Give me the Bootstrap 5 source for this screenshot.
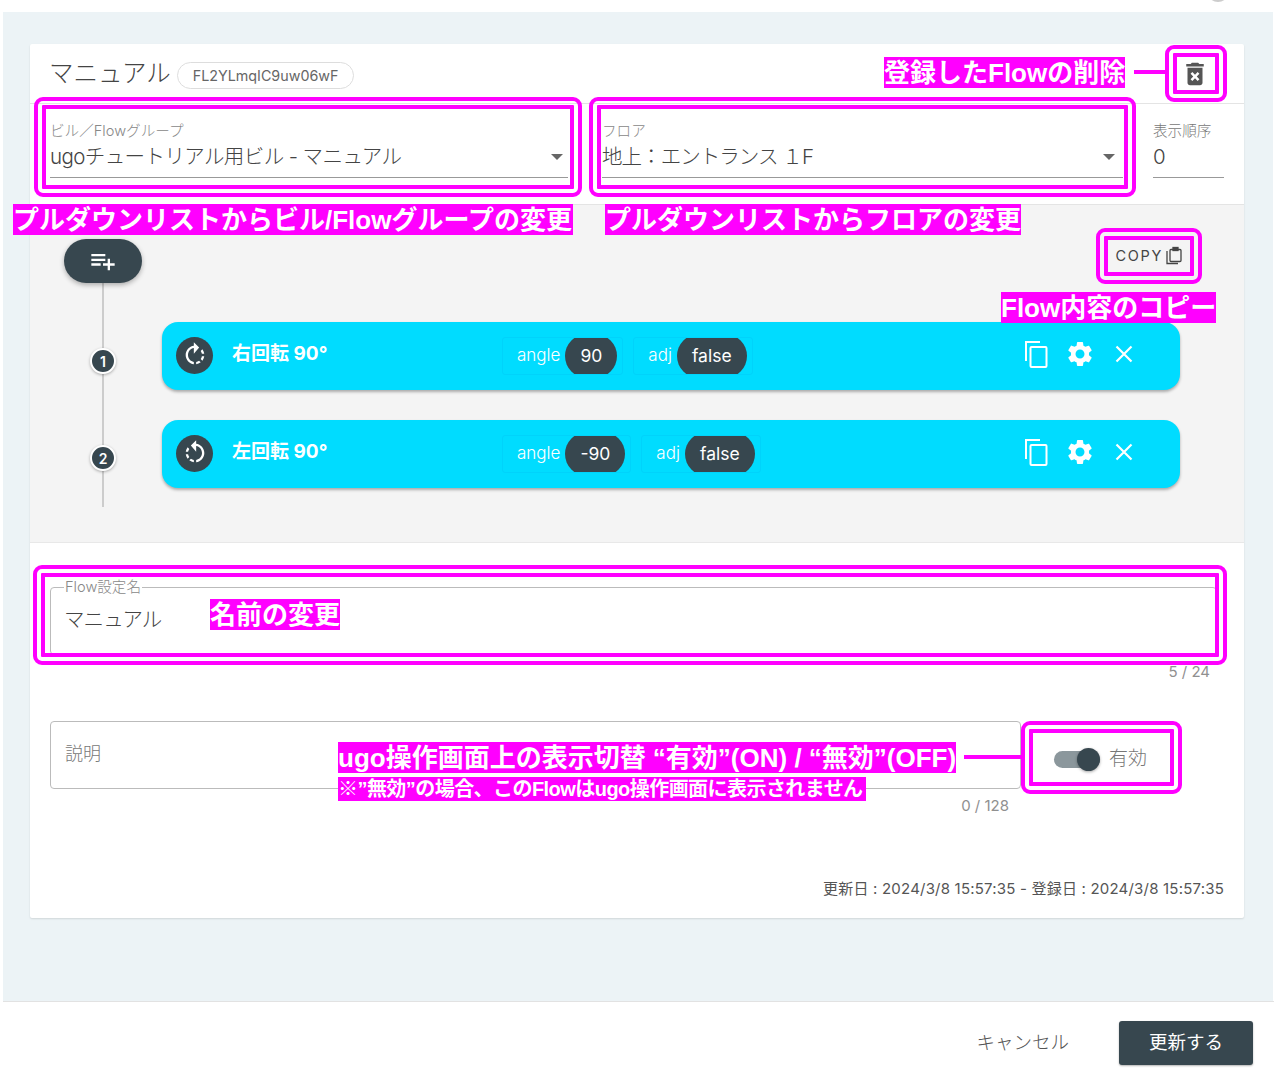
<!DOCTYPE html>
<html lang="ja">
<head>
<meta charset="utf-8">
<title>Flow</title>
<link href="https://cdn.jsdelivr.net/npm/bootstrap@5.3.0/dist/css/bootstrap.min.css" rel="stylesheet">
<style>
:root{--ink:#37474f;--cy:#00dcff;--hot:#ff00ff}
html,body{height:100%}
body{background:#fff;font-family:"Inter","Noto Sans CJK JP",sans-serif;color:#444;position:relative;height:1071px;overflow:hidden}
.shell{height:1071px;padding-top:12px}
.avatar-edge{position:absolute;left:1207px;top:-20px;width:22px;height:22px;border-radius:50%;background:#ccc}
.stage{height:989px;margin:0 1px 0 3px;background:#ecf3f6;padding:32px 0 0 27px}
.sheet{width:1214px;height:874px;border:0;border-radius:2px;box-shadow:0 1px 2px rgba(0,0,0,.12);overflow:hidden}
.head-row{height:60px;border-bottom:1px solid #e4e4e4;padding:0 34px 0 20px}
.title-txt{font-size:24.500px;font-weight:300;color:#444;margin:0 0 0 -1px;line-height:1}
.id-chip{margin:4px 0 0 6px;height:27px;padding:0 15px;border:1px solid #ddd;border-radius:14px;font-size:14.300px;color:#666;background:#fff;font-weight:400}
.pick-row{height:101px;padding:0 20px;border-bottom:1px solid #e4e4e4;gap:0}
.pick{padding-top:17px;position:relative}
.pick-a{width:518px;margin-right:34px}.pick-b{width:521px;margin-right:30px}.pick-c{width:71px}
.pick label{display:block;font-size:14.600px;line-height:20px;color:#888;font-weight:300}
.pick .form-select,.pick .form-control{height:37px;padding:0 0 5px;border:0;border-bottom:1px solid #999;border-radius:0;background:none;font-size:20.500px;color:#444;font-weight:300;line-height:32px;box-shadow:none}
.pick-a .form-select{letter-spacing:-.6px}
.pick-b .form-select{letter-spacing:-.95px}
.pick-c label{color:#777}
.caret-mark{position:absolute;right:5px;top:50px;width:0;height:0;border-left:6px solid transparent;border-right:6px solid transparent;border-top:6px solid #666}
.pick-b .caret-mark{right:8px}
.flow-zone{height:338px;background:#f4f4f4;border-bottom:1px solid #e8e8e8;padding-top:34px}
.tool-row{padding:0 50px 0 34px;height:44px}
.add-pill{width:78px;height:44px;border-radius:22px;background:var(--ink);border:0;padding:0;box-shadow:0 2px 5px rgba(0,0,0,.3)}
.copy-btn{background:none;border:0;padding:0 10px;height:28px;font-size:14.500px;letter-spacing:1.700px;color:#444;gap:1px;margin-top:3px}
.rail{margin-left:72px;border-left:2px solid #ccc;height:224px;padding-top:39px}
.step{height:68px;margin-bottom:30px}
.step-num{width:26px;height:26px;margin:26px 0 0 -14px;border-radius:50%;background:var(--ink);border:2px solid #fff;color:#fff;font-size:14px;font-weight:600;box-shadow:0 1px 3px rgba(0,0,0,.3);flex:none}
.step-two .step-num{margin-top:25px}
.cmd{margin-left:46px;width:1018px;height:68px;background:var(--cy);border-radius:16px;padding:0 46px 0 14px;color:#fff;box-shadow:0 2px 3px rgba(0,0,0,.3)}
.cmd-ic{width:37px;height:37px;border-radius:50%;background:var(--ink);flex:none;margin-top:-2px}
.cmd-name{width:270px;margin-left:19px;font-size:19px;font-weight:700;margin-top:-3px}
.param{height:38px;border:1px solid rgba(0,150,220,.12);border-radius:3px;padding:0 5px 0 14px;margin-right:10px;overflow:hidden;font-size:17px;font-weight:300}
.param-k{margin-right:5px}
.param-v{height:44px;border-radius:22px;background:var(--ink);padding:0 15px;font-weight:400;font-size:17.500px;flex:none}
.cmd-acts{margin-left:auto;gap:19px;margin-top:-4px}
.ic-copy{margin-right:-3px}
.form-wrap{padding:0 20px;position:relative}
.name-set{margin:34px 7px 0 0;border:1px solid #bbb;border-radius:4px;padding:0 13px;height:78px}
.name-set legend{float:none;width:auto;font-size:14.600px;line-height:20px;color:#888;margin:0;padding:0 1px;font-weight:300}
.name-set .form-control{border:0;padding:0;font-size:20.500px;height:36px;font-weight:300;color:#444;background:none;box-shadow:none;margin-top:3px;letter-spacing:-.9px}
.count-txt{font-size:15px;color:#909090;line-height:20px;font-weight:400}
.count-a{text-align:right;padding-right:14px;margin-top:7px}
.desc-row{margin-top:39px}
.desc-col{width:971px}
.desc-box{height:68px;border:1px solid #bbb;border-radius:4px;padding:18px 14px 18px 14px;font-size:18px;font-weight:300;resize:none;background:#fff;box-shadow:none}
.desc-box::placeholder{color:#777}
.count-b{text-align:right;padding-right:12px;margin-top:7px}
.sw-wrap{margin:21px 0 0 33px;min-height:0;padding:0;gap:9px;height:34px}
.track{width:46px;height:17px;border-radius:9px;background:#8b979c;position:relative;display:block}
.track::after{content:"";position:absolute;right:0;top:-3px;width:23px;height:23px;border-radius:50%;background:var(--ink);box-shadow:0 1px 3px rgba(0,0,0,.35)}
.sw-label{font-size:19px;color:#777;font-weight:300}
.stamp{text-align:right;font-size:15px;letter-spacing:.2px;color:#555;margin-top:63px;line-height:20px;font-weight:400}
.bottom-bar{position:absolute;left:3px;right:0;top:1001px;height:70px;background:#fff;border-top:1px solid #e2e2e2;padding:13px 21px 0 0}
.ghost-btn{background:none;border:0;font-size:18.500px;color:#555;padding:0;margin-right:50px;font-weight:300}
.main-btn{width:134px;height:44px;background:var(--ink);color:#fff;border:0;border-radius:3px;font-size:18.500px;font-weight:400;padding:0;box-shadow:0 1px 2px rgba(0,0,0,.3)}
.hl{position:absolute;border:4px solid var(--hot);outline:4px solid var(--hot);outline-offset:4px;border-radius:1px;pointer-events:none}
.tag{position:absolute;background:var(--hot);color:#fff;font-family:"Liberation Sans","Noto Sans CJK JP",sans-serif;font-weight:700;font-size:26px;line-height:32px;height:31px;white-space:nowrap}
.tag-sm{font-size:20px;line-height:25px;height:24px;letter-spacing:-.55px}
.dash{position:absolute;height:4px;background:var(--hot)}
</style>
</head>
<body>
<div class="avatar-edge"></div>
<div class="shell">
  <div class="stage">
    <div class="card sheet">
      <div class="head-row d-flex align-items-center">
        <h1 class="title-txt">マニュアル</h1>
        <span class="id-chip d-inline-flex align-items-center">FL2YLmqIC9uw06wF</span>
        <svg class="ms-auto" width="30" height="30" viewBox="0 0 24 24" fill="#555"><path d="M6 19c0 1.100.9 2 2 2h8c1.100 0 2-.9 2-2V7H6v12zm2.460-7.120l1.410-1.410L12 12.590l2.120-2.120 1.410 1.410L13.410 14l2.120 2.120-1.410 1.410L12 15.410l-2.120 2.120-1.410-1.410L10.590 14l-2.130-2.120zM15.500 4l-1-1h-5l-1 1H5v2h14V4z"/></svg>
      </div>
      <div class="pick-row d-flex">
        <div class="pick pick-a"><label>ビル／Flowグループ</label><select class="form-select"><option>ugoチュートリアル用ビル - マニュアル</option></select><span class="caret-mark"></span></div>
        <div class="pick pick-b"><label>フロア</label><select class="form-select"><option>地上：エントランス １F</option></select><span class="caret-mark"></span></div>
        <div class="pick pick-c"><label>表示順序</label><input class="form-control" value="0"></div>
      </div>
      <div class="flow-zone">
        <div class="tool-row d-flex justify-content-between align-items-start">
          <button class="add-pill d-flex align-items-center justify-content-center" type="button"><svg width="28" height="28" viewBox="0 0 24 24" fill="#fff"><path d="M14 10H2v2h12v-2zm0-4H2v2h12V6zm4 8v-4h-2v4h-4v2h4v4h2v-4h4v-2h-4zM2 16h8v-2H2v2z"/></svg></button>
          <button class="copy-btn d-flex align-items-center" type="button">COPY<svg width="20" height="20" viewBox="0 0 20 20" fill="none" stroke="#444" stroke-width="1.300"><path d="M3 5v12.500h11"/><rect x="6" y="3.500" width="11" height="12" rx="1"/><rect x="9" y="1.500" width="5" height="3" fill="#444"/></svg></button>
        </div>
        <div class="rail">
          <div class="step d-flex align-items-start">
            <div class="step-num d-flex align-items-center justify-content-center">1</div>
            <div class="cmd d-flex align-items-center">
              <div class="cmd-ic d-flex align-items-center justify-content-center"><svg width="28" height="28" viewBox="0 0 24 24" fill="#fff"><path d="M15.550 5.550L11 1v3.070C7.060 4.560 4 7.920 4 12s3.050 7.440 7 7.930v-2.020c-2.840-.48-5-2.940-5-5.910s2.160-5.430 5-5.910V11l4.550-5.450zM19.930 11c-.17-1.390-.72-2.730-1.620-3.890l-1.420 1.420c.54.75.88 1.600 1.020 2.470h2.020zM13 17.900v2.020c1.390-.17 2.740-.71 3.900-1.610l-1.440-1.440c-.75.54-1.590.89-2.460 1.030zm3.890-2.420l1.420 1.410c.9-1.160 1.450-2.500 1.620-3.890h-2.020c-.14.87-.48 1.720-1.020 2.480z"/></svg></div>
              <div class="cmd-name">右回転 90°</div>
              <div class="param d-flex align-items-center"><span class="param-k">angle</span><span class="param-v d-flex align-items-center">90</span></div>
              <div class="param d-flex align-items-center"><span class="param-k">adj</span><span class="param-v d-flex align-items-center">false</span></div>
              <div class="cmd-acts d-flex align-items-center">
                <svg class="ic-copy" width="25" height="28" viewBox="0 0 25 28" fill="none" stroke="#fff" stroke-width="2"><path d="M2 21V2h14"/><rect x="6.500" y="7" width="16" height="20" rx="1"/></svg>
                <svg width="30" height="30" viewBox="0 0 24 24" fill="#fff"><path d="M19.140 12.940c.04-.3.06-.61.06-.94 0-.32-.02-.64-.07-.94l2.030-1.580c.18-.14.23-.41.12-.61l-1.920-3.320c-.12-.22-.37-.29-.59-.22l-2.390.96c-.5-.38-1.030-.7-1.620-.94l-.36-2.540c-.04-.24-.24-.41-.48-.41h-3.840c-.24 0-.43.17-.47.41l-.36 2.540c-.59.24-1.130.57-1.620.94l-2.390-.96c-.22-.08-.47 0-.59.22L2.740 8.870c-.12.21-.08.47.12.61l2.030 1.580c-.05.3-.09.63-.09.94s.02.64.07.94l-2.030 1.580c-.18.14-.23.41-.12.61l1.920 3.320c.12.22.37.29.59.22l2.390-.96c.5.38 1.030.7 1.620.94l.36 2.540c.05.24.24.41.48.41h3.840c.24 0 .44-.17.47-.41l.36-2.540c.59-.24 1.130-.56 1.620-.94l2.390.96c.22.08.47 0 .59-.22l1.920-3.320c.12-.22.07-.47-.12-.61l-2.010-1.580zM12 15.600c-1.980 0-3.600-1.620-3.600-3.600s1.620-3.600 3.600-3.600 3.600 1.620 3.600 3.600-1.620 3.600-3.600 3.600z"/></svg>
                <svg width="20" height="20" viewBox="0 0 20 20" stroke="#fff" stroke-width="2.200"><path d="M2.500 2.500l15 15M17.500 2.500l-15 15"/></svg>
              </div>
            </div>
          </div>
          <div class="step step-two d-flex align-items-start">
            <div class="step-num d-flex align-items-center justify-content-center">2</div>
            <div class="cmd d-flex align-items-center">
              <div class="cmd-ic d-flex align-items-center justify-content-center"><svg width="28" height="28" viewBox="0 0 24 24" fill="#fff"><path transform="matrix(-1 0 0 1 24 0)" d="M15.550 5.550L11 1v3.070C7.060 4.560 4 7.920 4 12s3.050 7.440 7 7.930v-2.020c-2.840-.48-5-2.940-5-5.910s2.160-5.430 5-5.910V11l4.550-5.450zM19.930 11c-.17-1.390-.72-2.730-1.620-3.890l-1.420 1.420c.54.75.88 1.600 1.020 2.470h2.020zM13 17.900v2.020c1.390-.17 2.740-.71 3.900-1.610l-1.440-1.440c-.75.54-1.590.89-2.460 1.030zm3.890-2.420l1.420 1.410c.9-1.160 1.450-2.500 1.620-3.890h-2.020c-.14.87-.48 1.720-1.020 2.480z"/></svg></div>
              <div class="cmd-name">左回転 90°</div>
              <div class="param d-flex align-items-center"><span class="param-k">angle</span><span class="param-v d-flex align-items-center">-90</span></div>
              <div class="param d-flex align-items-center"><span class="param-k">adj</span><span class="param-v d-flex align-items-center">false</span></div>
              <div class="cmd-acts d-flex align-items-center">
                <svg class="ic-copy" width="25" height="28" viewBox="0 0 25 28" fill="none" stroke="#fff" stroke-width="2"><path d="M2 21V2h14"/><rect x="6.500" y="7" width="16" height="20" rx="1"/></svg>
                <svg width="30" height="30" viewBox="0 0 24 24" fill="#fff"><path d="M19.140 12.940c.04-.3.06-.61.06-.94 0-.32-.02-.64-.07-.94l2.030-1.580c.18-.14.23-.41.12-.61l-1.920-3.320c-.12-.22-.37-.29-.59-.22l-2.390.96c-.5-.38-1.030-.7-1.620-.94l-.36-2.540c-.04-.24-.24-.41-.48-.41h-3.840c-.24 0-.43.17-.47.41l-.36 2.540c-.59.24-1.130.57-1.620.94l-2.390-.96c-.22-.08-.47 0-.59.22L2.740 8.870c-.12.21-.08.47.12.61l2.030 1.580c-.05.3-.09.63-.09.94s.02.64.07.94l-2.030 1.580c-.18.14-.23.41-.12.61l1.920 3.320c.12.22.37.29.59.22l2.390-.96c.5.38 1.030.7 1.620.94l.36 2.540c.05.24.24.41.48.41h3.840c.24 0 .44-.17.47-.41l.36-2.540c.59-.24 1.130-.56 1.620-.94l2.390.96c.22.08.47 0 .59-.22l1.920-3.320c.12-.22.07-.47-.12-.61l-2.010-1.580zM12 15.600c-1.980 0-3.600-1.620-3.600-3.600s1.620-3.600 3.600-3.600 3.600 1.620 3.600 3.600-1.620 3.600-3.600 3.600z"/></svg>
                <svg width="20" height="20" viewBox="0 0 20 20" stroke="#fff" stroke-width="2.200"><path d="M2.500 2.500l15 15M17.500 2.500l-15 15"/></svg>
              </div>
            </div>
          </div>
        </div>
      </div>
      <div class="form-wrap">
        <fieldset class="name-set"><legend>Flow設定名</legend><input class="form-control" value="マニュアル"></fieldset>
        <div class="count-txt count-a">5 / 24</div>
        <div class="desc-row d-flex align-items-start">
          <div class="desc-col">
            <textarea class="form-control desc-box" placeholder="説明"></textarea>
            <div class="count-txt count-b">0 / 128</div>
          </div>
          <div class="sw-wrap d-flex align-items-center"><span class="track"></span><span class="sw-label">有効</span></div>
        </div>
        <div class="stamp">更新日 : 2024/3/8 15:57:35 - 登録日 : 2024/3/8 15:57:35</div>
      </div>
    </div>
  </div>
</div>
<div class="bottom-bar d-flex align-items-center justify-content-end">
  <button class="ghost-btn" type="button">キャンセル</button>
  <button class="main-btn" type="button">更新する</button>
</div>

<div class="hl" style="left:42px;top:105px;width:532px;height:84px"></div>
<div class="hl" style="left:597px;top:105px;width:531px;height:84px"></div>
<div class="hl" style="left:1173px;top:53px;width:46px;height:41px"></div>
<div class="hl" style="left:1104px;top:236px;width:90px;height:40px"></div>
<div class="hl" style="left:41px;top:573px;width:1178px;height:84px"></div>
<div class="hl" style="left:1029px;top:729px;width:145px;height:57px"></div>
<div class="dash" style="left:1134px;top:70px;width:31px"></div>
<div class="dash" style="left:964px;top:755px;width:57px"></div>
<div class="tag" style="left:884px;top:57px;width:241px">登録したFlowの削除</div>
<div class="tag" style="left:13px;top:204px;width:560px">プルダウンリストからビル/Flowグループの変更</div>
<div class="tag" style="left:605px;top:204px;width:416px">プルダウンリストからフロアの変更</div>
<div class="tag" style="left:1001px;top:292px;width:215px">Flow内容のコピー</div>
<div class="tag" style="left:210px;top:599px;width:130px">名前の変更</div>
<div class="tag" style="left:338px;top:742px;width:618px">ugo操作画面上の表示切替 “有効”(ON) / “無効”(OFF)</div>
<div class="tag tag-sm" style="left:338px;top:777px;width:528px">※”無効”の場合、このFlowはugo操作画面に表示されません</div>
<script src="https://cdn.jsdelivr.net/npm/bootstrap@5.3.0/dist/js/bootstrap.bundle.min.js"></script>
</body>
</html>
